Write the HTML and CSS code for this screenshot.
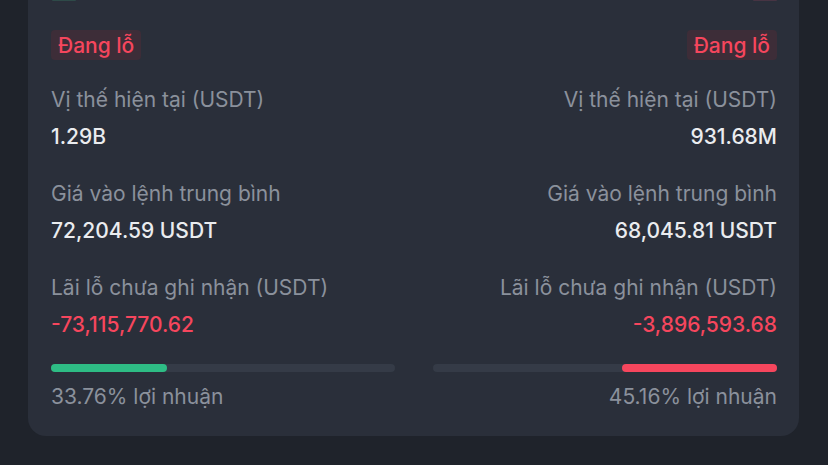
FILE: index.html
```html
<!DOCTYPE html>
<html lang="vi">
<head>
<meta charset="utf-8">
<title>Vị thế</title>
<link rel="stylesheet" href="styles.css">
</head>
<body>
<div class="card">
  <div class="cols">
    <div class="col">
      <div class="stub stub-green"></div>
      <span class="badge">Đang lỗ</span>
      <div class="label first">Vị thế hiện tại (USDT)</div>
      <div class="value">1.29B</div>
      <div class="label">Giá vào lệnh trung bình</div>
      <div class="value">72,204.59 USDT</div>
      <div class="label">Lãi lỗ chưa ghi nhận (USDT)</div>
      <div class="value loss">-73,115,770.62</div>
      <div class="track"><div class="fill fill-green" style="width:33.76%"></div></div>
      <div class="pct">33.76% lợi nhuận</div>
    </div>
    <div class="col right">
      <div class="stub stub-red"></div>
      <span class="badge">Đang lỗ</span>
      <div class="label first">Vị thế hiện tại (USDT)</div>
      <div class="value">931.68M</div>
      <div class="label">Giá vào lệnh trung bình</div>
      <div class="value">68,045.81 USDT</div>
      <div class="label">Lãi lỗ chưa ghi nhận (USDT)</div>
      <div class="value loss">-3,896,593.68</div>
      <div class="track track-right"><div class="fill fill-red" style="width:45.16%"></div></div>
      <div class="pct">45.16% lợi nhuận</div>
    </div>
  </div>
</div>
</body>
</html>
```
FILE: styles.css
```css
html, body {
  margin: 0;
  padding: 0;
}
body {
  background: #1f232b;
  width: 828px;
  height: 465px;
  overflow: hidden;
  font-family: "Inter", "Noto Sans", sans-serif;
}
.card {
  margin: 0 29px 0 28px;
  background: #2a2f3a;
  border-radius: 0 0 18px 18px;
  padding: 0 22px 27px 23px;
}
.cols {
  display: grid;
  grid-template-columns: 1fr 1fr;
  column-gap: 38px;
}
.col {
  display: flex;
  flex-direction: column;
  align-items: flex-start;
}
.col.right {
  align-items: flex-end;
  text-align: right;
}
.stub {
  width: 24px;
  height: 1px;
  border-radius: 0 0 3px 3px;
}
.stub-green { background: #2e4a48; margin-left: 1px; }
.stub-red { background: #473443; }
.badge {
  margin-top: 29px;
  height: 30px;
  line-height: 31px;
  padding: 0 7px;
  border-radius: 4px;
  background: #3d2d38;
  color: #f6465d;
  font-size: 21px;
  font-weight: 500;
}
.label {
  margin-top: 32px;
  padding-top: 1px;
  height: 24px;
  line-height: 24px;
  font-size: 21px;
  color: #8b919c;
  white-space: nowrap;
}
.label.first {
  margin-top: 27px;
}
.value {
  margin-top: 11px;
  padding-top: 2px;
  height: 24px;
  line-height: 24px;
  font-size: 21px;
  font-weight: 500;
  color: #eaecef;
  white-space: nowrap;
}
.value.loss {
  color: #f6465d;
}
.track {
  margin-top: 27px;
  width: 100%;
  height: 8px;
  border-radius: 4px;
  background: #353b47;
  display: flex;
}
.track-right {
  justify-content: flex-end;
}
.fill {
  height: 100%;
  border-radius: 4px;
}
.fill-green { background: #2ebd85; }
.fill-red { background: #f6465d; }
.pct {
  margin-top: 12px;
  padding-top: 1px;
  height: 24px;
  line-height: 24px;
  font-size: 21px;
  color: #8b919c;
  white-space: nowrap;
}
```
